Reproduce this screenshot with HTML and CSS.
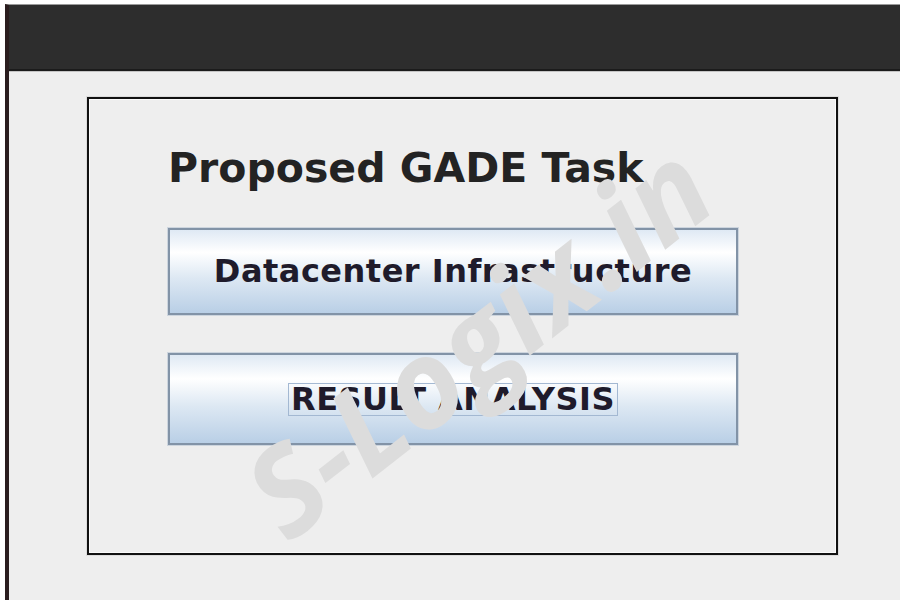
FILE: index.html
```html
<!DOCTYPE html>
<html>
<head>
<meta charset="utf-8">
<link rel="stylesheet" href="styles.css">
</head>
<body>
<div class="window">
  <div class="titlebar"></div>
  <div class="content">
    <div class="panel">
      <div class="title">Proposed GADE Task</div>
      <div class="btn btn-first"><span class="label">Datacenter Infrastructure</span></div>
      <div class="btn btn-second"><span class="label focus">RESULT ANALYSIS</span></div>
    </div>
  </div>
</div>
<div class="watermark">S-Logix.in</div>
</body>
</html>
```
FILE: styles.css
```css
html, body {
  margin: 0;
  padding: 0;
  background: #ffffff;
  width: 900px;
  height: 600px;
  overflow: hidden;
  position: relative;
}
.window {
  margin: 4px 0 0 5px;
  border-top: 1px solid #9a9a9a;
  border-left: 4px solid #2a1d1e;
  height: 595px;
  display: flex;
  flex-direction: column;
}
.titlebar {
  height: 64px;
  background: #2d2d2d;
  border-bottom: 2px solid #1b1b1b;
}
.content {
  flex: 1;
  background: #eeeeee;
  border-top: 1px solid #c4c4c4;
  padding: 25px 0 0 78px;
}
.panel {
  width: 668px;
  height: 409px;
  border: 2px solid #111111;
  box-shadow: inset 0 0 0 1px #fafafa, 0 0 0 1px #dcdcdc;
  padding: 45px 0 0 79px;
  display: flex;
  flex-direction: column;
  align-items: flex-start;
}
.title {
  font-family: "DejaVu Sans", sans-serif;
  font-weight: bold;
  font-size: 41px;
  line-height: 48px;
  color: #232323;
}
.btn {
  width: 566px;
  border: 2px solid #8293a7;
  box-shadow: 0 0 0 1px #cdd5de;
  background: linear-gradient(to bottom, #dfe9f4 0%, #ffffff 27%, #dde8f3 58%, #b9cfe6 100%);
  display: flex;
  align-items: center;
  justify-content: center;
  font-family: "DejaVu Sans", sans-serif;
  font-weight: bold;
  font-size: 32px;
  letter-spacing: 0.5px;
  color: #1f1b2b;
}
.btn-first {
  margin-top: 36px;
  height: 83px;
}
.btn-second {
  margin-top: 38px;
  height: 88px;
}
.label {
  line-height: 37px;
}
.focus {
  border: 1px solid #a3b8d2;
  padding: 0 2px;
  line-height: 31px;
}
.watermark {
  position: absolute;
  left: 476px;
  top: 338px;
  transform: translate(-50%, -50%) rotate(-38deg);
  font-family: "Open Sans", sans-serif;
  font-weight: 700;
  font-style: italic;
  font-size: 122px;
  line-height: 1;
  color: #dcdcdc;
  white-space: nowrap;
}
```
